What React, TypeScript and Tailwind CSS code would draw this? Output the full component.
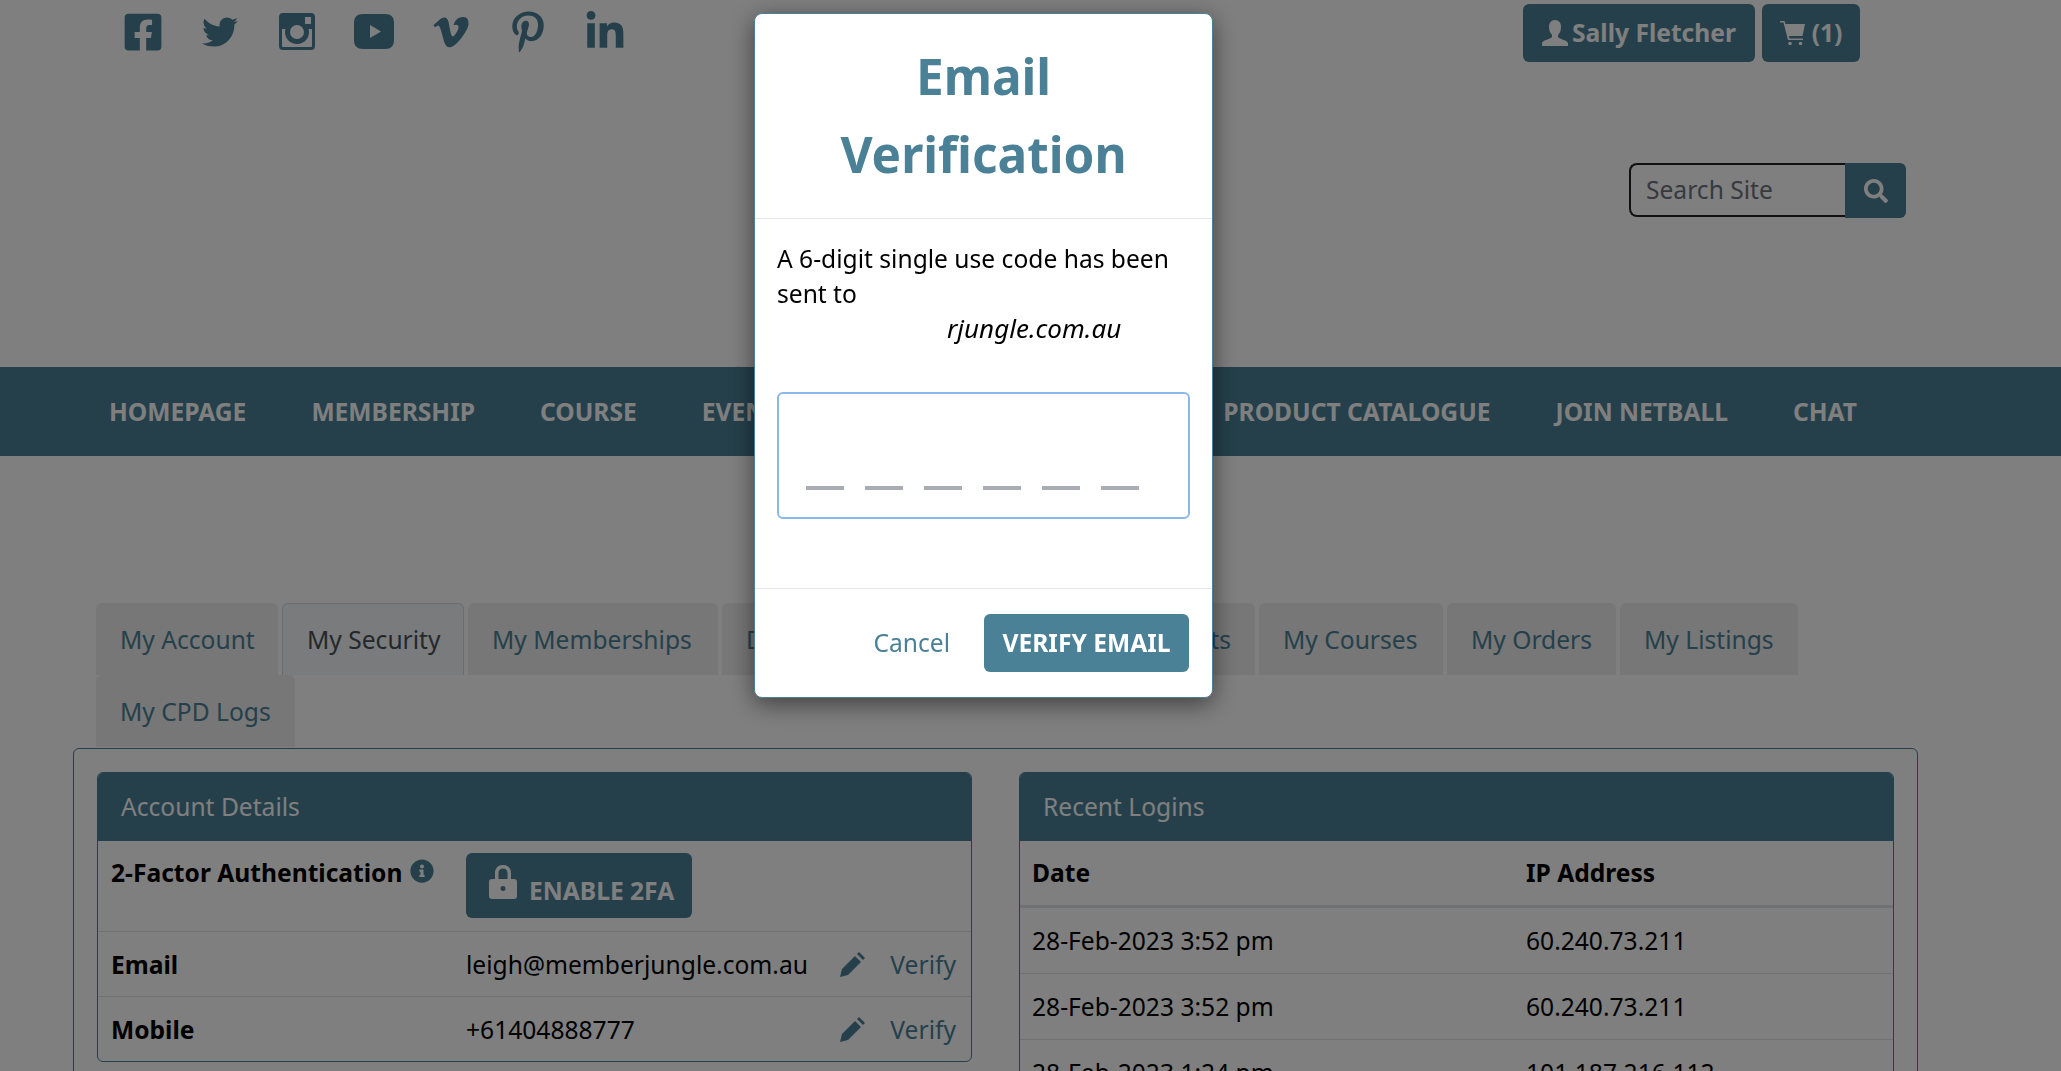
import {
  FaFacebookSquare,
  FaTwitter,
  FaVimeoV,
  FaPinterestP,
  FaLinkedinIn,
  FaSearch,
  FaInfoCircle,
} from 'react-icons/fa'

const logins = [
  { date: '28-Feb-2023 3:52 pm', ip: '60.240.73.211' },
  { date: '28-Feb-2023 3:52 pm', ip: '60.240.73.211' },
  { date: '28-Feb-2023 1:24 pm', ip: '101.187.216.112' },
]

function InstagramIcon() {
  return (
    <svg viewBox="0 0 36 37" className="h-[37px] w-[36px]" fill="#4a8197">
      <path
        fillRule="evenodd"
        d="M4 0h28a4 4 0 0 1 4 4v29a4 4 0 0 1-4 4H4a4 4 0 0 1-4-4V4a4 4 0 0 1 4-4zM26 4v7h6V4h-6zM3 16v17a1 1 0 0 0 1 1h28a1 1 0 0 0 1-1V16h-3.400a12 12 0 1 1-23.200 0H3zM18 12a7 7 0 1 0 0 14 7 7 0 0 0 0-14z"
      />
    </svg>
  )
}

function YoutubeIcon() {
  return (
    <svg viewBox="0 0 40 35" className="h-[35px] w-[40px]" fill="#4a8197">
      <path
        fillRule="evenodd"
        d="M9 0h22c6 0 9 3 9 9v17c0 6-3 9-9 9H9c-6 0-9-3-9-9V9c0-6 3-9 9-9zM16 11v13l11-6.500L16 11z"
      />
    </svg>
  )
}

function UserIcon() {
  return (
    <svg viewBox="0 0 26 26" className="h-[26px] w-[26px]" fill="#ffffff">
      <path d="M13 0c4 0 6 3 6 7 0 3-1 6-3 8v2c1 2 9 3 10 6v3H0v-3c1-3 9-4 10-6v-2c-2-2-3-5-3-8 0-4 2-7 6-7z" />
    </svg>
  )
}

function CartIcon() {
  return (
    <svg viewBox="0 0 26 26" className="h-[26px] w-[26px]" fill="#ffffff">
      <path d="M0 1h4.500l1 3H25l-2.500 12H9l.5 2.500H23V20H8L3.500 2.500H0V1z" />
      <circle cx="10" cy="23.500" r="1.800" />
      <circle cx="20.500" cy="23.500" r="1.800" />
    </svg>
  )
}

function PencilIcon() {
  return (
    <svg viewBox="0 0 26 26" className="h-[26px] w-[26px]" fill="#4a8197">
      <path d="M1 25l2-8L16 4l6 6L9 23l-8 2z" />
      <path d="M18 2l2-2 6 6-2 2-6-6z" />
    </svg>
  )
}

function LockIcon() {
  return (
    <svg viewBox="0 0 28 34" className="h-[34px] w-[28px]" fill="#ffffff">
      <path
        fillRule="evenodd"
        d="M14 0c5 0 8 3.500 8 8v6h3a3 3 0 0 1 3 3v14a3 3 0 0 1-3 3H3a3 3 0 0 1-3-3V17a3 3 0 0 1 3-3h3V8c0-4.500 3-8 8-8zm0 3.500c-3 0-4.500 2-4.500 4.500v6h9V8c0-2.500-1.500-4.500-4.500-4.500zM14 21a2.500 2.500 0 1 0 0 5 2.500 2.500 0 0 0 0-5z"
      />
    </svg>
  )
}

function Tab({ label, active, className }: { label: string; active?: boolean; className: string }) {
  return (
    <div
      className={`h-[72px] flex items-center whitespace-nowrap rounded-t-md px-6 ${
        active
          ? 'bg-[#f5f7fa] text-[#495057] border border-[#d5d8dc] border-b-0 pt-[1px]'
          : 'bg-[#eeeeee] text-[#4a8197] pt-[3px]'
      } ${className}`}
    >
      {label}
    </div>
  )
}

function AccountRow({ label, value }: { label: string; value: string }) {
  return (
    <div className="h-[65px] flex items-center border-t border-[#dee2e6] pl-[13px] pr-[15px] pt-[2px]">
      <div className="w-[355px] font-bold text-black">{label}</div>
      <div className="w-[373px] text-black">{value}</div>
      <PencilIcon />
      <div className="ml-auto text-[#4a8197]">Verify</div>
    </div>
  )
}

export default function App() {
  return (
    <div className="relative h-screen overflow-hidden bg-white font-['Noto_Sans',sans-serif] text-[24.6px] leading-[34.5px] text-black">
      <div className="flex h-[163px] items-start justify-between">
        <div className="ml-[104px] mt-[13px] flex h-[37px] items-center text-[42px] text-[#4a8197]">
          <div className="w-[77px] flex justify-center"><FaFacebookSquare /></div>
          <div className="w-[77px] flex justify-center"><FaTwitter className="text-[36px]" /></div>
          <div className="w-[77px] flex justify-center"><InstagramIcon /></div>
          <div className="w-[77px] flex justify-center"><YoutubeIcon /></div>
          <div className="w-[77px] flex justify-center"><FaVimeoV className="text-[40px]" /></div>
          <div className="w-[77px] flex justify-center"><FaPinterestP /></div>
          <div className="w-[77px] flex justify-center"><FaLinkedinIn /></div>
        </div>
        <div className="mr-[201px] mt-[4px] flex gap-[7px] font-bold text-white">
          <div className="h-[58px] w-[232px] flex items-center justify-center gap-[4px] rounded-md bg-[#4a8197]">
            <UserIcon />
            Sally Fletcher
          </div>
          <div className="h-[58px] w-[98px] flex items-center justify-center gap-[6px] rounded-md bg-[#4a8197]">
            <CartIcon />
            (1)
          </div>
        </div>
      </div>

      <div className="flex justify-end pr-[155px]">
        <div className="h-[54px] w-[216px] flex items-center rounded-l-lg border-2 border-r-0 border-[#222222] pl-[15px] text-[#6c757d]">
          Search Site
        </div>
        <div className="h-[55px] w-[61px] flex items-center justify-center rounded-r-md bg-[#4a8197] text-white">
          <FaSearch className="text-[24px]" />
        </div>
      </div>

      <div className="mt-[149px] h-[89px] flex items-center justify-between bg-[#4a8197] pl-[109px] pr-[204px] pt-[1px] font-bold uppercase text-white">
        <div className="flex gap-[65px]">
          <span>Homepage</span>
          <span>Membership</span>
          <span>Course</span>
          <span>Events</span>
        </div>
        <div className="flex gap-[65px]">
          <span>Product Catalogue</span>
          <span>Join Netball</span>
          <span>Chat</span>
        </div>
      </div>

      <div className="mt-[147px] pl-[96px] flex flex-wrap gap-x-[4px] w-[1810px]">
        <Tab label="My Account" className="w-[182px]" />
        <Tab label="My Security" active className="w-[182px]" />
        <Tab label="My Memberships" className="w-[250px]" />
        <Tab label="Directory" className="w-[190px]" />
        <Tab label="My Events" className="w-[339px] justify-end" />
        <Tab label="My Courses" className="w-[184px]" />
        <Tab label="My Orders" className="w-[169px]" />
        <Tab label="My Listings" className="w-[178px]" />
        <Tab label="My CPD Logs" className="w-[199px]" />
      </div>

      <div className="ml-[73px] mt-[1px] w-[1845px] flex gap-[47px] rounded-md border border-[#4a8197] p-[23px]">
        <div className="w-[875px] self-start rounded-md border border-[#4a8197] overflow-hidden">
          <div className="h-[68px] flex items-center bg-[#4a8197] px-[23px] text-white">Account Details</div>
          <div className="h-[90px] flex items-start pl-[13px] pt-[12px]">
            <div className="w-[355px] flex items-center gap-[8px] font-bold text-black pt-[3px]">
              2-Factor Authentication
              <FaInfoCircle className="text-[24px] text-[#4a8197] -mt-[4px]" />
            </div>
            <div className="h-[65px] w-[226px] flex items-start gap-[12px] rounded-md bg-[#4a8197] pl-[23px] pt-[12px] font-bold text-white">
              <LockIcon />
              <span className="mt-[9px]">ENABLE 2FA</span>
            </div>
          </div>
          <AccountRow label="Email" value="leigh@memberjungle.com.au" />
          <AccountRow label="Mobile" value="+61404888777" />
        </div>

        <div className="w-[875px] rounded-md border border-[#4a8197] overflow-hidden">
          <div className="h-[68px] flex items-center bg-[#4a8197] px-[23px] text-white">Recent Logins</div>
          <div className="h-[67px] flex items-center border-b-[3px] border-[#dee2e6] pl-[12px] font-bold">
            <div className="w-[494px]">Date</div>
            <div>IP Address</div>
          </div>
          {logins.map((row, i) => (
            <div key={i} className="h-[66px] flex items-center border-b border-[#dee2e6] pl-[12px] pt-[2px]">
              <div className="w-[494px]">{row.date}</div>
              <div>{row.ip}</div>
            </div>
          ))}
        </div>
      </div>

      <div className="fixed inset-0 bg-black/50" />

      <div className="fixed left-[754px] top-[13px] w-[459px] rounded-lg border border-[#4a8197] bg-white shadow-[0_6px_24px_rgba(0,0,0,0.5)]">
        <div className="h-[205px] border-b border-[#e5e7eb] px-6 pt-[23px] text-center text-[49.5px] font-bold leading-[78px] text-[#4a8197]">
          Email
          <br />
          Verification
        </div>
        <div className="h-[370px] border-b border-[#e5e7eb] px-[22px] pt-[23px]">
          <p>A 6-digit single use code has been sent to</p>
          <p className="pl-[170px] italic text-[26px]">rjungle.com.au</p>
          <div className="mt-[46px] h-[127px] flex items-end gap-[21px] rounded-md border-2 border-[#8ab8e8] pb-[27px] pl-[27px]">
            {[0, 1, 2, 3, 4, 5].map((n) => (
              <div key={n} className="h-[4px] w-[38px] bg-[#a8adb3]" />
            ))}
          </div>
        </div>
        <div className="h-[108px] flex items-center justify-end gap-[34px] pr-[23px]">
          <span className="text-[#4a8197]">Cancel</span>
          <div className="h-[58px] w-[205px] flex items-center justify-center rounded-md bg-[#4a8197] font-bold text-white">
            VERIFY EMAIL
          </div>
        </div>
      </div>
    </div>
  )
}
